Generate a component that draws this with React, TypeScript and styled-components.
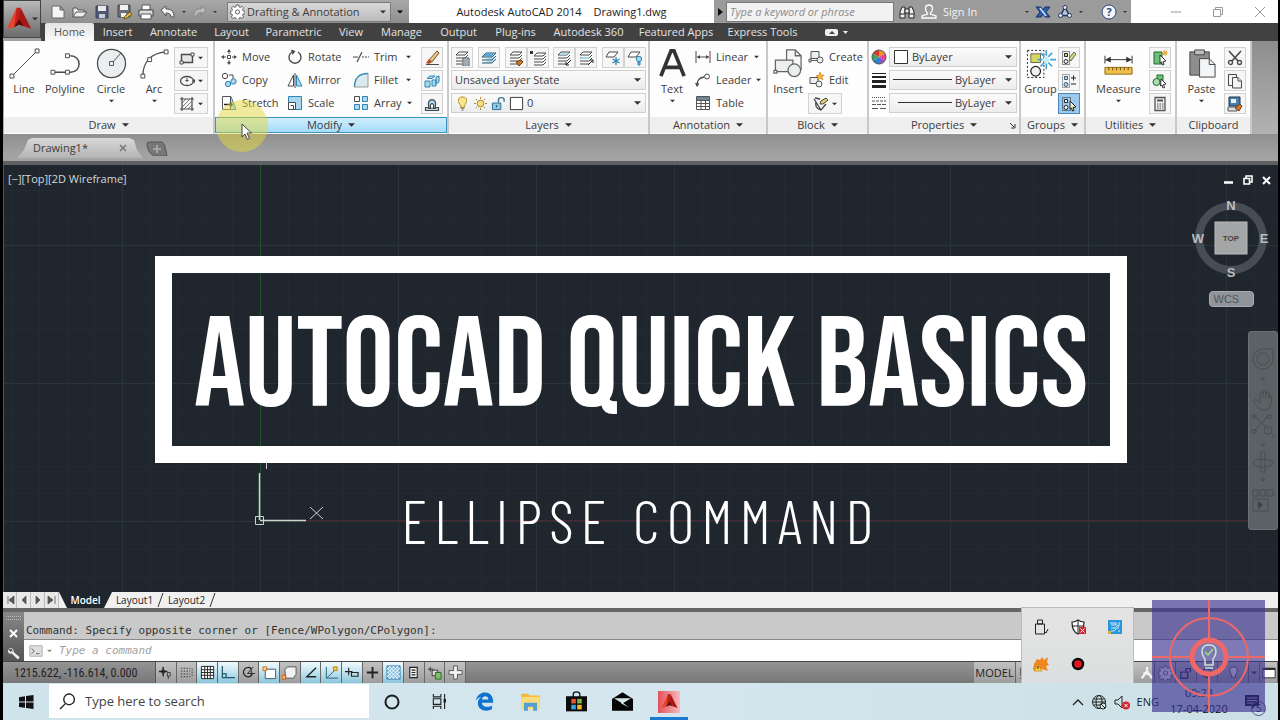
import React from 'react';
import styled, { createGlobalStyle, css } from 'styled-components';

const GlobalStyle = createGlobalStyle`
  * { box-sizing: border-box; }
  html, body, #root { margin: 0; min-height: 100vh; }
  body { background: #000; font-family: "Open Sans", "Noto Sans", sans-serif; font-size: 11px; line-height: 16px; color: #3c3c3c; overflow: hidden; }
  button, input, select { font: inherit; color: inherit; margin: 0; padding: 0; border: 0; background: none; border-radius: 0; outline: 0; }
  button { cursor: pointer; white-space: nowrap; }
  svg { display: block; flex: none; }
  a { color: inherit; text-decoration: none; }
`;

/* ---------- icons ---------- */

const K = '#4a4a4a';
const B = '#2f86b5';
const L = '#a9d8ee';
const sheets = <path d="M4 3h9l-3 3H1zM1 9h9l3-3M1 12h9l3-3M1 15h9l3-3" transform="translate(1 -1)" stroke={K} fill="#fff" />;

const glyphs: Record<string, React.ReactNode> = {
  newFile: <path d="M2 2h8l4 4v8H2zM10 2v4h4" fill="#f5f5f5" stroke="#666" />,
  open: <path d="M1 13V4h4l1 2h6v2M1 13l3-5h11l-4 5z" fill="#eee" stroke="#555" />,
  save: <g><path d="M2 2h12v12H2z" fill="#4d5873" stroke="#3b4358" /><path d="M4 2h8v5H4z" fill="#e8e8e8" /><path d="M5 10h6v4H5z" fill="#c8ccd6" /></g>,
  saveAs: <g><path d="M2 1h12v12H2z" fill="#6b6f7b" stroke="#444" /><path d="M4 1h8v5H4zM5 9h5v4H5z" fill="#f2f2f2" /><path d="m8 15 1-3 5-4 2 2-5 4z" fill="#e3bb4e" stroke="#7a5a12" /></g>,
  print: <g><path d="M4 1h8v5H4z" fill="#fff" stroke="#555" /><path d="M1 6h14v6H1z" fill="#ddd" stroke="#444" /><path d="M3 10h10v5H3z" fill="#fff" stroke="#555" /></g>,
  undo: <path d="M1 6 6 2v3c5 0 8 2 8 8h-3c0-3-2-4-5-4v3z" fill="#f1f1f1" stroke="#555" />,
  redo: <path d="m15 6-5-4v3c-5 0-8 2-8 8h3c0-3 2-4 5-4v3z" fill="#bbb" stroke="#848484" />,
  gear: <g fill="none" stroke="#555"><path d="M6.700 1h2.600l.4 2 1.300.6 1.800-1.100 1.700 1.700-1.100 1.800.6 1.300 2 .4v2.600l-2 .4-.6 1.300 1.100 1.800-1.700 1.700-1.800-1.100-1.300.6-.4 2H6.700l-.4-2-1.300-.6-1.800 1.100-1.700-1.700L2.600 12 2 10.700l-1.500-.4V7.700L2 7.300 2.600 6 1.500 4.200l1.700-1.700L5 3.600 6.300 3z" fill="#fff" /><circle cx="8" cy="8.500" r="2.200" /></g>,
  binoc: <g fill="#eee" stroke="#222"><path d="M1 14V8l2-5h3v11zM10 14V3h3l2 5v6z" /><path d="M6 5h4v4H6zM1 10h5M10 10h5" /></g>,
  user: <g fill="none" stroke="#fff" strokeWidth="1.300"><path d="M8 1c5 0 4 6 1.500 8v1L15 12v2H1v-2l5.500-2V9C4 7 3 1 8 1z" /></g>,
  exchange: <g><path d="M1 3h5l2 3 2-3h5l-4 5 4 5h-5l-2-3-2 3H1l4-5z" fill="#2b5fae" stroke="#16305f" /><path d="m5 4 6 8" stroke="#cfe0ff" strokeWidth="1.500" /></g>,
  a360: <g fill="none" stroke="#26365a"><path d="M8 3.500 3.500 11.500h9z" strokeWidth="1.500" fill="#b9c4d6" /><circle cx="8" cy="3.500" r="2" fill="#e4ecf7" /><circle cx="3.500" cy="11.500" r="2" fill="#e4ecf7" /><circle cx="12.500" cy="11.500" r="2" fill="#e4ecf7" /></g>,
  line: <g fill="#fff" stroke={K}><path d="M3 29 29 3" /><path d="M1 27h4v4H1zM27 1h4v4h-4z" /></g>,
  pline: <g stroke={K} fill="none"><path d="M3 25h18c12 0 12-17 0-17" strokeWidth="1.500" /><path d="M1 23h4v4H1zM16 23h4v4h-4zM16 6h4v4h-4z" fill="#fff" /></g>,
  circle: <g stroke={K}><circle cx="16" cy="16" r="14.500" fill="#e9eef0" strokeWidth="1.300" /><path d="m16 16 10-11" /><path d="M14 14h4v4h-4z" fill="#fff" /></g>,
  arc: <g stroke={K} fill="none"><path d="M4 29C4 14 13 5 28 4" strokeWidth="1.300" /><path d="M2 27h4v4H2zM26 2h4v4h-4zM9 10h4v4H9z" fill="#fff" /></g>,
  rect: <g stroke={K} fill="#e6e6e6"><path d="M2.500 4.500h11v8h-11z" strokeWidth="1.400" /><path d="M1 11h3v3H1zM12 3h3v3h-3z" fill="#fff" /></g>,
  ellipse: <g stroke={K} fill="none"><ellipse cx="8" cy="8" rx="6.500" ry="4.500" strokeWidth="1.300" /><path d="M8 5v4M6.500 7.500h3M14 7h2v2h-2z" fill={K} /></g>,
  hatch: <g stroke={K} fill="none"><path d="M3 1v14M13 1v14M1 3h14M1 13h14" strokeWidth="1.200" /><path d="m3 7 4-4M3 11l8-8M5 13l8-8M9 13l4-4" strokeWidth=".7" /></g>,
  move: <g fill={K} stroke={K}><path d="M8 2v3M8 11v3M2 8h3M11 8h3" /><path d="m8 0 2 3H6zM8 16l2-3H6zM0 8l3-2v4zM16 8l-3-2v4z" stroke="none" /><path d="M6.500 6.500h3v3h-3z" fill="#fff" /></g>,
  copy: <g fill="#fff" stroke={K}><circle cx="4" cy="4" r="2.700" /><path d="M8 3h4v4" fill="none" /><circle cx="7" cy="12" r="2.700" fill={L} stroke={B} /><circle cx="12.500" cy="9.500" r="2.700" fill={L} stroke={B} /></g>,
  stretch: <g fill="none" stroke={K}><path d="M8 1.500h2l5 13H8" fill={L} stroke={B} /><path d="M1.500 1.500h8v13h-8z" fill="#fff" stroke="#555" /><path d="M3 9.500h8M9 7.500l2 2-2 2" strokeWidth="1.400" stroke="#222" /></g>,
  rotate: <g fill="none" stroke={K} strokeWidth="1.400"><path d="M5 3a6 6 0 1 0 6 0" /><path d="M4 .5 8.500 2 5.500 6z" fill={K} stroke="none" /></g>,
  mirror: <g stroke={K} fill="#fff"><path d="M6.500 3v11H1z" /><path d="M9.500 3v11H15z" fill={L} stroke={B} /><path d="M8 1v15" /></g>,
  scale: <g><path d="M1.500 1.500h13v13h-13z" fill={L} stroke={B} /><path d="M1.500 7.500h7v7h-7z" fill="#fff" stroke={K} /><path d="M3.500 10.500h3v4h-3" fill="none" stroke={K} /></g>,
  trim: <g fill="none" stroke={K} strokeWidth="1.200"><path d="M0 8h5M4 13l5-10" /><path d="M9 8h7" strokeDasharray="2 1" /></g>,
  fillet: <g><path d="M1.500 15C1.500 6 6 1.500 15 1.500V15z" fill="#dceaf0" /><path d="M1.500 15C1.500 6 6 1.500 15 1.500" fill="none" stroke={B} strokeWidth="1.400" /><path d="M15 1v14H1" stroke="#999" fill="none" /></g>,
  array: <g fill={L} stroke={B}><path d="M1.500 1.500h5v5h-5z" fill="#fff" stroke={K} /><path d="M9.500 1.500h5v5h-5zM1.500 9.500h5v5h-5zM9.500 9.500h5v5h-5z" /></g>,
  erase: <g><path d="m5 10 8-9 2 2-7 9z" fill="#e6c48b" stroke="#7a5522" /><path d="m2 13 3-4 3 3-3 2z" fill="#c0492b" /><path d="M2 14.500h13" stroke={K} /></g>,
  explode: <g fill={L} stroke={B}><path d="M1 8h5v6H1zM3 5.500 6 3h5L8 5.500zM8 7h4v6H8zM12 4l3-1v6l-3 2z" /></g>,
  offset: <g fill="none" stroke={K} strokeWidth="1.200"><path d="M1.500 14.500v-3H5C1 1 15 1 11 11.500h3.500v3z" fill={L} /><path d="M4 12.500h3C4 6 12 6 9 12.500h3" fill="#fff" /></g>,
  layers: <g>{sheets}<path d="M9 8h6v8H9z" fill="#dce8ef" stroke="#456" /><path d="M10 10h4M10 12h4M10 14h4" stroke="#456" strokeWidth=".8" /></g>,
  layers2: <g><path d="M5 3h10l-4 4H1zM1 10h10l4-4M1 13h10l4-4" stroke="#2b5a72" fill={L} /><path d="M5 3h8l-2 3H3z" fill="#5aa8cf" /></g>,
  layers3: <g>{sheets}<path d="m8 12 5-2 2 2-4 4z" fill="#c77a2a" stroke="#70420f" /></g>,
  layers4: <g><g transform="translate(2 1)">{sheets}</g><path d="M0 1h3v3H0z" fill="#333" /></g>,
  layers5: <g>{sheets}<path d="M5 3h8l-2 2H3z" fill={L} /><path d="m15 10-5 5M10 12v3h3" stroke="#222" fill="none" /></g>,
  layers6: <g>{sheets}<path d="M2 9h8l2-2H4z" fill={L} /><path d="m10 15 5-5M12 10h3v3" stroke="#222" fill="none" /></g>,
  layerFreeze: <g><path d="M4 2h9l-4 5H1z" fill="#fff" stroke={K} /><path d="M11 7v8M7.500 9l7 4M14.500 9l-7 4" stroke={B} strokeWidth="1.300" /></g>,
  layerOff: <g><path d="M4 2h9l-4 5H1z" fill="#fff" stroke={K} /><circle cx="12" cy="9" r="2.700" fill={L} stroke={B} /><path d="M11 12h2v3h-2z" fill="#9ab" stroke={B} /></g>,
  bulb: <g><path d="M8 1c-6 0-5 6-2 9v2h4v-2c3-3 4-9-2-9z" fill="#fbe58a" stroke="#b08f2a" /><path d="M6 13h4M7 15h2" stroke="#555" /></g>,
  sun: <g stroke="#a87f26"><circle cx="8" cy="8" r="3.500" fill="#f9e27b" /><path d="M8 1v2M8 13v2M1 8h2M13 8h2M3 3l1.500 1.500M11.500 11.500 13 13M3 13l1.500-1.500M11.500 4.500 13 3" /></g>,
  unlock: <g><path d="M1.500 7.500h9v7h-9z" fill="#8fc6e6" stroke="#2c6c93" /><path d="M8 7V4c0-3 6-3 6 0v2" fill="none" stroke="#3c6f8d" strokeWidth="1.500" /><path d="M6 10v2" stroke="#134" /></g>,
  square: <path d="M1.500 1.500h13v13h-13z" fill="#fff" stroke="#333" />,
  bigA: <path d="M4 29 14.500 3h3L28 29M8 20h16" fill="none" stroke="#333" strokeWidth="3.800" />,
  linear: <g fill={K} stroke={K}><path d="M1 2v12M15 2v12M2 8h12" /><path d="m2 8 3-2v4zM14 8l-3-2v4z" stroke="none" /></g>,
  leader: <g stroke={K} fill="none"><path d="M2 14C2 8 4 6 9 5" strokeWidth="1.300" /><circle cx="12" cy="4.500" r="2.500" /><path d="m0 11 2 4 2.500-3.500z" fill={K} stroke="none" /></g>,
  table: <g stroke="#555" fill="#fff"><path d="M1.500 1.500h13v13h-13z" /><path d="M2 2h12v3H2z" fill="#708591" stroke="none" /><path d="M1 5.500h14M1 8.500h14M1 11.500h14M6 5v10M10.500 5v10" /></g>,
  insert: <g stroke="#666" fill="#eceff0" strokeWidth="1.300"><path d="M14 2h9l6 6v14H14z" fill="#f6f6f6" /><path d="M2.500 12.500h18v12h-18z" /><circle cx="22" cy="23" r="6.500" /><path d="M1 23h3v3H1z" fill="#fff" /><path d="M23 2v6h6" fill="none" /></g>,
  create: <g stroke="#555" fill="#eceff0"><path d="M3 2.500h8v7H3z" /><path d="M1 11.500h9" /><circle cx="12" cy="11" r="3" /><path d="M1 10h2v3H1z" fill="#fff" /></g>,
  editBlock: <g stroke="#555" fill="#eceff0"><path d="M2 5.500h8v6H2z" /><circle cx="11" cy="12" r="3" /><path d="m12 0 1 3 3 0-2 2 1 3-3-2-2 2 0-3-2-1 3-1z" fill="#f6b63f" stroke="#c67c12" strokeWidth=".6" /></g>,
  attrib: <g stroke="#444" fill="none"><path d="m1 3 7 11 5-6M2 2l5 1M8 14c-5-1-6-5-5-8" strokeWidth="1.300" /><path d="m7 8 1-3 5-3 2 2-5 4z" fill="#e9cf6c" /></g>,
  lweight: <path d="M1 1h14v1H1zM1 4h14v2H1zM1 8h14v3H1zM1 13h14v3H1z" fill="#222" />,
  ltype: <g stroke="#555"><path d="M1 2.500h14" strokeDasharray="1 1" /><path d="M1 6h14" strokeDasharray="3 1" /><path d="M1 9.500h14" strokeDasharray="4 1" /><path d="M1 13.500h14" strokeDasharray="6 2" /></g>,
  group: <g fill="none" stroke="#222"><path d="M2.500 2.500h17v28h-17z" strokeDasharray="2 2" /><path d="M6 6h10v9H6z" fill="#d7d85f" stroke="#665" /><circle cx="11" cy="24" r="5" fill="#eef3f5" strokeWidth="1.300" /><path d="M22 2v6M22 16v6M13 12h5M26 12h6M16 5l4 4M28 5l-4 4M16 19l4-4M28 19l-4-4" stroke="#42a5d6" strokeWidth="1.700" /><circle cx="22" cy="12" r="3" fill="#c9ecfb" stroke="none" /></g>,
  ungroup: <g fill="none" stroke="#222"><path d="M1.500 1.500h7v13h-7z" strokeDasharray="1 1" /><path d="M3.500 3.500h3v3h-3z" fill="#dd6" /><circle cx="5" cy="11.500" r="2" /><path d="m8 8 5-6 2 2-5 7z" fill="#cfd67b" stroke="#665" /></g>,
  groupEdit: <g fill="none" stroke="#456"><path d="M1.500 1.500h7v13h-7z" strokeDasharray="1 1" /><path d="M3.500 3.500h3v3h-3z" fill={L} /><circle cx="5" cy="11.500" r="2" fill={L} /><path d="M10 5h5M12.500 2.500v5M10 11h5" stroke="#222" /></g>,
  groupSel: <g fill="none" stroke="#222"><path d="M1.500 1.500h8v13h-8z" strokeDasharray="1 1" /><path d="M3.500 3.500h3v3h-3z" fill="#fff" /><circle cx="5" cy="11.500" r="2" fill="#fff" /><path d="m9 5 6 6-3 .5 1 3-1.500.5-1-3L9 13z" fill="#eaf4c4" /></g>,
  measure: <g><path d="M2 20h28v7H2z" fill="#efc04c" stroke="#8f6a14" /><path d="M6 20v3M10 20v3M14 20v3M18 20v3M22 20v3M26 20v3" stroke="#6b4e0c" /><path d="M2 8v8M30 8v8M3 12h26" stroke="#333" fill="none" /><path d="m2 12 6-3v6zM30 12l-6-3v6z" fill="#333" /></g>,
  qselect: <g><path d="M2 2h8v12H2z" fill="#6fbf73" stroke="#1f6b2b" /><path d="m8 5 6 6-3 .5 1 3-1.500.5-1-3L8 13z" fill="#fff" stroke="#333" /><path d="M13 0v6M10 3h6M11 1l4 4M15 1l-4 4" stroke="#e8a420" /></g>,
  selectAll: <g><path d="M5 2h6v6H5z" fill="#6fbf73" stroke="#1f6b2b" /><circle cx="4.500" cy="9" r="3.500" fill="#a9dcb0" stroke="#1f6b2b" /><path d="m9 6 5 5-2.500.5 1 3-1.500.5-1-3-1.500 1z" fill="#fff" stroke="#333" /></g>,
  calc: <g stroke="#555" fill="#eee"><path d="M3 1.500h10v13H3z" strokeWidth="1.300" /><path d="M5 4.500h6" strokeWidth="2" /><path d="M5 8h1.500M7.500 8H9M10 8h1.500M5 10h1.500M7.500 10H9M10 10h1.500M5 12h1.500M7.500 12H9M10 12h1.500" /></g>,
  paste: <g stroke="#444"><path d="M4 4h20v24H4z" fill="#8d8d8d" /><path d="M9 2h10v5H9z" fill="#bfbfbf" /><path d="M14 11h10l6 6v13H14z" fill="#f3f5f7" /><path d="M24 11v6h6" fill="none" /></g>,
  cut: <g fill="none" stroke={K} strokeWidth="1.300"><path d="m2 1 9 10M14 1 5 11" strokeWidth="1.600" /><circle cx="3.500" cy="12.500" r="2" /><circle cx="12.500" cy="12.500" r="2" /></g>,
  copyClip: <g fill="#f4f4f4" stroke={K}><path d="M1.500 1.500h8v11h-8z" /><path d="M5.500 4.500H11l3.500 3.500v7h-9z" /><path d="M11 4.500V8h3.500" /></g>,
  matchProp: <g><path d="M2 1h11v9H2z" fill="#4a7fae" stroke="#234" /><path d="M4 3h5v4H4z" fill="#e6eff6" /><path d="M1 11h9v4H1z" fill="#ddd" stroke="#555" /><path d="m8 12 5-4 2 2-3 5z" fill="#cf7a2d" stroke="#70420f" /></g>,
  infer: <g stroke="#222" fill="none"><path d="M1 7h9M5.500 2v10" strokeWidth="1.500" /><path d="M4 5.500h3v3H4zM10 8h3v4h-3zM11 12v3" strokeWidth=".8" /></g>,
  snap: <path d="M2 3.500h10M2 6.500h10M2 9.500h10M2 12.500h10M14 4v9" stroke="#333" strokeDasharray="1.500 1.500" />,
  grid: <path d="M1.500 1.500h13v13h-13zM1 5h14M1 8h14M1 11h14M5 1v14M8 1v14M11 1v14" fill="#fff" stroke="#222" />,
  ortho: <path d="M2.500 1v12.500H16M2.500 9.500h4v4" fill="none" stroke="#22586b" strokeWidth="1.300" />,
  polar: <g fill="none" stroke="#222"><path d="M11 4a5 5 0 1 0 1 6" strokeWidth="1.300" /><path d="M13 2 7 9h8M11 5v6" /></g>,
  osnap: <g><path d="M3.500 4.500h11v10h-11z" fill="#fff" stroke="#456" /><path d="M1 2h4v4H1z" fill="#f8cf90" stroke="#c77718" /></g>,
  osnap3d: <g><path d="M3 5l3-3h9v8l-3 4H4z" fill="#f1f1f1" stroke="#555" /><path d="M0 11h4v4H0z" fill="#f8b070" stroke="#c75b18" /></g>,
  otrack: <path d="M14 3 4 12.500h10" fill="none" stroke="#222" strokeWidth="1.400" />,
  ducs: <g fill="none" stroke="#28627c"><path d="M2.500 2v12H15M3 14 12 5" /><path d="M10 2h4v4h-4z" fill="#f1c945" stroke="#b38314" /></g>,
  dyn: <path d="M1 7h8M5 3v8M8 8h7v4H8z" fill="none" stroke="#222" strokeWidth="1.200" />,
  plus: <path d="M8 2v12M2 8h12" stroke="#222" strokeWidth="2" />,
  tpy: <g><path d="M1 1h14v14H1z" fill="#8cc4e8" stroke="#2a70a8" /><path d="m1 5 4-4M1 9l8-8M1 13l12-12M3 15 15 3M7 15l8-8M11 15l4-4M1 11l4 4M1 7l8 8M1 3l12 12M3 1l12 12M7 1l8 8M11 1l4 4" stroke="#fff" strokeWidth=".8" /></g>,
  qp: <path d="M4 2.500h8v11H4zM6 5.500h4M6 8h4M6 10.500h4" fill="#eee" stroke="#222" strokeWidth="1.200" />,
  cycle: <g stroke="#333" fill="#ddd"><path d="M1 4.500h6M3.500 2v5" /><path d="M5.500 5.500h6v6h-6z" /><path d="M9 8h6v7H9z" fill="#7dc06a" stroke="#2b6b22" /></g>,
  cross: <path d="M6 1h4v5h5v4h-5v5H6v-5H1V6h5z" fill="#f3f3f3" stroke="#555" />,
  layoutIco: <path d="M2 2h12v9H2zM1 14h14M4 4l5 5" fill="#eee" stroke="#333" />,
  person: <path d="M8 1v5M8 6l-6 8M8 6l6 8M4 8l8 2" stroke="#f2f2f2" strokeWidth="2.500" fill="none" />,
  lock: <path d="M2 7h8v7H2zM8 7V3h5v4" fill="none" stroke="#24244c" strokeWidth="1.600" />,
  lightOff: <path d="M8 2c-6 0-4 6-2 8v3h4v-3c2-2 4-8-2-8z" fill="#fff" stroke="#444" />,
  max: <g><path d="M1 2.500h14v11H1z" fill="#fff" stroke="#222" /><path d="M1 3.500h14" stroke="#222" strokeWidth="2" /></g>,
  wrench: <path d="M2 2c2-2 7 0 6 4l7 6c1 2-1 4-3 2L6 8C2 9 0 5 2 3l2 3 3-1-1-3z" fill="#f1f1f1" />,
  prompt: <g><path d="M1 2h14v12H1z" fill="#dedede" stroke="#aaa" /><path d="m3 5 3 3-3 3M8 11h4" stroke="#555" fill="none" /></g>,
  start: <path d="M1 3.200 7 2.300V7.600H1zM8 2.100 15.500 1v6.600H8zM1 8.500h6v5.300L1 12.900zM8 8.500h7.500V15L8 13.900z" fill="#111" />,
  search: <g fill="none" stroke="#222" strokeWidth="1.300"><circle cx="9.500" cy="6" r="5" /><path d="m6 10-5 5" /></g>,
  cortana: <circle cx="8" cy="8" r="5.800" fill="none" stroke="#1c1f22" strokeWidth="1.800" />,
  taskview: <path d="M2.500 5h8v6h-8zM2.500 0v3h8V0M2.500 16v-3h8v3M14.500 0v16M14 6h1.500v2.500H14z" fill="none" stroke="#222" strokeWidth="1.200" />,
  edge: <path d="M.7 7.500C1.500 2.500 5 .3 8.600.4c4.500.1 6.900 3.600 6.700 8.600H5.800c.1 3.500 5.100 4.600 8.500 2.300v3.200C8.700 17.300 2.500 15 2.400 9.400 2.400 6.900 3.800 5 5.600 4.200 3.300 4.400 1.500 5.700.7 7.500zM5.900 6.300h5.300c0-3.600-4.900-3.700-5.300 0z" fill="#0f74cf" />,
  explorer: <g><path d="M1 2h5l1.500 1.500H15V13H1z" fill="#f5b83a" /><path d="M1 4.500h14V14H1z" fill="#fbdc7b" /><path d="M3 15V9h10v6h-3v-3H6v3z" fill="#4d9fd6" /></g>,
  store: <g><path d="M5.500 5V2.500c0-2.500 5-2.500 5 0V5" fill="none" stroke="#111" /><path d="M0 4h16v11.500H0z" fill="#0b0b0b" /><path d="M4 6h3.500v3.500H4z" fill="#e8562a" /><path d="M8.500 6H12v3.500H8.500z" fill="#7db63b" /><path d="M4 10.500h3.500V14H4z" fill="#35a0da" /><path d="M8.500 10.500H12V14H8.500z" fill="#f2b62f" /></g>,
  mail: <g><path d="M0 6l8-5 8 5v9H0z" fill="#050505" /><path d="M1.500 5.500h13L8 9.500z" fill="#d7e6ed" /><path d="m7 8 6 4.500-6-3z" fill="#d7e6ed" /></g>,
  globe: <g fill="none" stroke="#222"><circle cx="8" cy="8" r="6.500" /><ellipse cx="8" cy="8" rx="3" ry="6.500" /><path d="M1.500 8h13M2.500 5h11M2.500 11h11" /><circle cx="12" cy="12" r="3" fill="#d5e6ec" /><path d="m10 10 4 4" /></g>,
  mute: <g><path d="M1 6h3l4-4v12l-4-4H1z" fill="none" stroke="#222" /><circle cx="12" cy="11.500" r="4" fill="#d3232e" /><path d="m10.300 9.800 3.400 3.400M13.700 9.800l-3.400 3.400" stroke="#fff" /></g>,
  notif: <g><path d="M1 1h14v11h-4l-3 3v-3H1z" fill="#08081c" /><path d="M3 4h10M3 6.500h10M3 9h7" stroke="#b9c8dc" /></g>,
  usb: <path d="M4.500 1h5v4h-5zM2.500 5h9v10h-9zM11 12l2 2 2-4" fill="none" stroke="#222" />,
  shield: <g><path d="M8 1c2 1.500 4 2 6 2 0 6-1 10-6 12C3 13 2 9 2 3c2 0 4-.5 6-2z" fill="#fff" stroke="#222" strokeWidth="1.200" /><path d="M8 1v14M2 7h12" stroke="#222" /><path d="M9 8h7v7H9z" fill="#d8232e" /><path d="m10.500 9.500 4 4M14.500 9.500l-4 4" stroke="#fff" /></g>,
  intel: <g><path d="M1 1h14v14H1z" fill="#2a96dc" /><path d="M3 4h6v2H4M12 3v4H9M4 9h8M4 12h3l2-2M11 12h2" fill="none" stroke="#d3f0ff" /><path d="M1 12h3v3H1z" fill="#d9b436" /></g>,
  fox: <g><path d="M1 8 4 3l3 1 2-3 2 3 4-3-1 5 2 3-3 1 2 5-6-2-9 1z" fill="#f1851f" /><path d="m5 8 4 7H1z" fill="#ffd23a" stroke="#b87a00" strokeWidth=".6" /><path d="M5 10v3" stroke="#222" /></g>,
  record: <circle cx="8" cy="8" r="5" fill="#e8141c" stroke="#0c0c0c" strokeWidth="2.500" />,
};

type IconProps = { name: string; size?: number; box?: number };
const Icon = ({ name, size = 16, box = 16 }: IconProps) => (
  <svg width={size} height={size} viewBox={`0 0 ${box} ${box}`} fill="none" aria-hidden="true">{glyphs[name]}</svg>
);
const Caret = ({ w = 7, color = '#333' }: { w?: number; color?: string }) => (
  <svg width={w} height={4} viewBox="0 0 8 4" aria-hidden="true"><path d="M0 0h8L4 4z" fill={color} /></svg>
);
const AutocadMark = ({ size }: { size: number }) => (
  <svg width={size} height={size} viewBox="0 0 32 32" aria-hidden="true">
    <path d="M13 2 1 28l9-2 5-9z" fill="#e8452f" />
    <path d="M13 2h5l-1 15-7 9z" fill="#c2201a" />
    <path d="M18 2 31 28l-9-3-6-8z" fill="#a81712" />
    <path d="m16 16 6 9-6-2-6 3z" fill="#5d0806" />
  </svg>
);

/* ---------- header ---------- */

const Shell = styled.div`
  min-height: 100vh; display: flex; flex-direction: column; margin: 0 2px 0 3px; position: relative; background: #8f8f8f;
`;
const Header = styled.header`
  display: grid; grid-template-columns: 38px minmax(0, 1fr); grid-template-rows: 23px 18px; background: #a0a0a0;
`;
const AppButton = styled.button`
  grid-row: 1 / 3; height: 38px; display: flex; align-items: center; justify-content: space-between; padding: 0 2px 0 2px;
  border: 1px solid #444; background: linear-gradient(#b9b9b9, #8a8a8a 60%, #6c6c6c);
`;
const TitleRow = styled.div`display: flex; background: #fff; min-width: 0;`;
const QuickAccess = styled.div`
  display: flex; align-items: center; gap: 6px; width: 368px; padding-left: 9px; background: linear-gradient(#a8a8a8, #8f8f8f);
`;
const ToolButton = styled.button`display: flex; align-items: center; justify-content: center;`;
const Workspace = styled.label`
  display: flex; align-items: center; gap: 2px; flex: 1; height: 20px; margin-left: 4px; padding: 0 4px 0 2px;
  border: 1px solid #7b7b7b; background: linear-gradient(#d8d8d8, #bcbcbc);
`;
const BareSelect = styled.select`appearance: none; flex: 1; min-width: 0; width: 100%; height: 18px; text-overflow: clip; white-space: nowrap;`;
const WindowTitle = styled.div`flex: 1; display: flex; justify-content: center; align-items: center; gap: 12px; color: #222; white-space: nowrap;`;
const InfoCenter = styled.div`
  display: flex; align-items: center; width: 417px; background: #9b9b9b; padding-right: 4px;
`;
const InfoArrow = styled.button`width: 12px; display: flex; justify-content: center;`;
const InfoSearch = styled.input`
  width: 168px; height: 20px; padding-left: 3px; border: 1px solid #777; background: #f2f2f2; font-style: italic;
  &::placeholder { color: #8b8b8b; opacity: 1; }
`;
const InfoTools = styled.div`flex: 1; display: flex; align-items: center; gap: 6px; padding-left: 5px; color: #f3f3f3;`;
const Spring = styled.span`flex: 1;`;
const WindowButtons = styled.div`width: 147px; display: flex; justify-content: space-between; align-items: center; padding: 0 13px 0 40px;`;

const TabRow = styled.nav`display: flex; background: #414141; padding-left: 4px; color: #e3e3e3; white-space: nowrap;`;
const Tab = styled.a<{ $active?: boolean; $w: number }>`
  width: ${p => p.$w}px; height: 18px; text-align: center; line-height: 18px;
  ${p => p.$active && css`background: linear-gradient(#e3e3e3, #fafafa); color: #555; border-radius: 2px 2px 0 0;`}
`;

/* ---------- ribbon ---------- */

const Ribbon = styled.section`display: flex; height: 93px; background: linear-gradient(#8d8d8d, #b2b2b2); padding-left: 1px;`;
const PanelBox = styled.section<{ $w: number }>`
  width: ${p => p.$w}px; flex: none; display: flex; flex-direction: column; background: #fdfdfd; border-right: 2px solid #c9c9c9; position: relative;
`;
const PanelBody = styled.div<{ $gap?: number; $inset?: number }>`flex: 1; display: flex; gap: ${p => p.$gap ?? 0}px; padding: 5px 4px 0 ${p => p.$inset ?? 2}px;`;
const PanelTitle = styled.button<{ $hot?: boolean }>`
  height: 16px; margin-bottom: 1px; display: flex; align-items: center; justify-content: center; gap: 6px; background: #efefef; position: relative;
  ${p => p.$hot && css`background: linear-gradient(#cfeefd, #a5dcf8); border: 1px solid #3f92bd;`}
`;
const Launcher = styled.span`position: absolute; right: 3px; top: 5px;`;
const BigButton = styled.button<{ $w: number }>`
  width: ${p => p.$w}px; display: flex; flex-direction: column; align-items: center; align-self: flex-start; padding-top: 2px; line-height: 16px;
`;
const BigLabel = styled.span`margin: 2px 0 2px;`;
const Stack = styled.div<{ $w: number }>`width: ${p => p.$w}px; display: flex; flex-direction: column; flex: none;`;
const RowButton = styled.button`
  display: flex; align-items: center; gap: 5px; height: 22px; text-align: left; margin-bottom: 1px;
  & > span { flex: 1; }
`;
const Chip = styled.button<{ $on?: boolean }>`
  height: 21px; margin: 1px 0; display: flex; align-items: center; justify-content: space-evenly; border: 1px solid #d2d2d2; background: #f6f6f6;
  ${p => p.$on && css`background: #9cc9f0; border-color: #4a86b8;`}
`;
const ChipRow = styled.div`display: flex; justify-content: space-between; height: 23px;`;
const ChipPair = styled.div<{ $w: number }>`width: ${p => p.$w}px; display: flex; & > button { flex: 1; }`;
const Combo = styled.label`
  display: flex; align-items: center; gap: 3px; height: 20px; margin: 1px 0; padding: 0 4px 0 3px; border: 1px solid #d0d0d0;
  background: linear-gradient(#fbfbfb, #ececec);
`;
const FixedSelect = styled(BareSelect)`flex: none; width: 42px;`;
const RowLine = styled.div`display: flex; align-items: center; gap: 2px; margin-bottom: 1px; & > label { flex: 1; min-width: 0; }`;
const Highlight = styled.div`
  position: absolute; left: 1px; top: 59px; width: 52px; height: 52px; border-radius: 50%; background: rgba(226, 216, 60, .5);
  pointer-events: none; z-index: 4; display: flex; align-items: center; justify-content: center; padding: 12px 0 0 10px;
`;

/* ---------- document area ---------- */

const DocBar = styled.div`
  height: 31px; display: flex; align-items: center; padding: 0 0 4px 14px; background: linear-gradient(#8f8f8f, #a3a3a3 80%); border-bottom: 4px solid #5e6163;
`;
const DocTab = styled.div`
  width: 126px; height: 20px; margin-top: 5px; display: flex; align-items: center; justify-content: space-between; padding: 0 16px;
  background: linear-gradient(#d8d8d8, #b4b4b4); clip-path: polygon(0 100%, 7px 60%, 11px 10%, 15px 0, 112px 0, 117px 10%, 120px 60%, 100% 100%);
`;
const Canvas = styled.main`flex: 1; min-height: 0; position: relative; background: #1f262e; overflow: hidden; border-left: 1px solid #555;`;
const Backdrop = styled.svg`position: absolute; inset: 0; width: 100%; height: 100%;`;
const ViewLabel = styled.div`position: absolute; left: 4px; top: 6px; color: #d4d8da;`;
const ViewControls = styled.div`position: absolute; right: 7px; top: 10px; display: flex; gap: 9px; align-items: center;`;
const CubeWrap = styled.div`position: absolute; right: 8px; top: 32px; width: 78px; display: flex; flex-direction: column; align-items: center;`;
const Wcs = styled.button`
  width: 45px; height: 16px; margin-top: 10px; padding-left: 4px; text-align: left; border-radius: 4px; border: 1px solid #a4aaae; background: #8f959a; color: #50565b;
  font: 11px/13px "Liberation Sans", sans-serif;
`;
const NavBar = styled.div`
  position: absolute; right: 0; top: 166px; width: 30px; height: 199px; border-radius: 3px; background: #5b6164; border: 1px solid #6b7174;
`;
const Poster = styled.div`position: absolute; inset: 0; display: flex; flex-direction: column; align-items: center; padding-top: 91px; color: #fff;`;
const PosterFrame = styled.h1`
  margin: 0; width: 90%; max-width: 972px; height: 207px; padding-top: 16px; border: 17px solid #fff; display: flex; align-items: center; justify-content: center;
  font: 400 128px/128px "Bebas Neue", "Roboto Condensed", "Liberation Sans Narrow", sans-serif; white-space: nowrap;
`;
const PosterSub = styled.h2`
  margin: 27px 0 0; font: 300 61px/60px "Barlow Condensed", "Roboto Condensed", "Lato", sans-serif; letter-spacing: 7px; white-space: nowrap;
`;

/* ---------- bottom ---------- */

const LayoutTabs = styled.div`
  height: 20px; display: flex; align-items: center; background: #f0f0f0; border-bottom: 4px solid #666; color: #222;
`;
const PageButton = styled.button`width: 14px; height: 16px; display: flex; align-items: center; justify-content: center; border-right: 1px solid #bbb; background: #e8e8e8;`;
const ModelTab = styled.button`
  width: 53px; height: 16px; background: #1f262e; color: #fff; font-weight: 600; font-size: 10px; clip-path: polygon(0 0, 100% 0, 45px 100%, 8px 100%);
`;
const LayoutTab = styled.button`width: 45px; height: 16px; font-size: 10px;`;
const CommandArea = styled.section`
  height: 50px; display: grid; grid-template-columns: 21px minmax(0, 1fr); grid-template-rows: 28px 21px; background: #5e5e5e;
  font: 11px/16px "DejaVu Sans Mono", monospace; border-bottom: 1px solid #444;
`;
const CommandSide = styled.div`
  grid-row: 1 / 3; display: flex; flex-direction: column; align-items: center; justify-content: space-between; padding: 4px 0 1px;
  background: linear-gradient(#888, #555);
`;
const CommandLog = styled.output`display: flex; align-items: flex-end; padding: 0 2px; background: #c9c9c9; border-bottom: 1px solid #888; color: #333; white-space: nowrap;`;
const CommandLine = styled.label`display: flex; align-items: center; gap: 4px; padding-left: 5px; background: #fff;`;
const CommandInput = styled.input`flex: 1; padding-left: 3px; font-style: italic; &::placeholder { color: #a2a2a2; opacity: 1; }`;

const StatusBar = styled.div`height: 21px; display: flex; background: linear-gradient(#949494, #777); color: #222; position: relative;`;
const Coords = styled.div`width: 153px; padding-left: 11px; font: 12px/22px "Roboto Condensed", "Liberation Sans Narrow", sans-serif; white-space: nowrap; border-right: 1px solid #555;`;
const StatusGroup = styled.div`display: flex; width: 310px; & > button { flex: 1; }`;
const StatusButton = styled.button<{ $on?: boolean; $w?: number }>`
  display: flex; align-items: center; justify-content: center; border-right: 1px solid #666; height: 21px;
  ${p => p.$w && css`width: ${p.$w}px;`}
  background: ${p => (p.$on ? 'linear-gradient(#f1fafd, #bfe3ef 50%, #8cc6da)' : 'linear-gradient(#c2c2c2, #9d9d9d)')};
`;
const Tray = styled.div`
  position: absolute; right: 144px; bottom: 0; width: 113px; height: 76px; display: grid; grid-template-columns: repeat(3, 1fr); place-items: center;
  background: linear-gradient(#e4e4e4, #dcdedf); border: 1px solid #bbb; border-bottom: 0;
`;
const TaskBar = styled.footer`height: 37px; display: flex; align-items: stretch; background: linear-gradient(90deg, #cfe3ea, #d5e6ee 50%, #cbe0e6); color: #222; position: relative;`;
const StartButton = styled.button`width: 46px; display: flex; align-items: center; justify-content: center;`;
const TaskSearch = styled.label`width: 320px; margin: 1px 0 2px; padding-left: 10px; display: flex; align-items: center; gap: 9px; background: #fff;`;
const TaskInput = styled.input`flex: 1; font-size: 13px; height: 30px; &::placeholder { color: #444; opacity: 1; }`;
const TaskButton = styled.button<{ $active?: boolean }>`
  width: 46px; display: flex; align-items: center; justify-content: center; border-bottom: 3px solid transparent; border-top: 3px solid transparent;
  ${p => p.$active && css`width: 38px; margin-left: 5px; border-bottom-color: #1b7bd0;`}
`;
const RedTile = styled.span`width: 22px; height: 22px; display: flex; align-items: center; justify-content: center; background: linear-gradient(90deg, #e2525a, #f7b9bd);`;
const TrayRight = styled.div`margin-left: auto; display: flex; align-items: center; gap: 7px; padding-right: 16px; font-size: 11px;`;
const Clock = styled.time`width: 66px; display: flex; flex-direction: column; align-items: center; padding-bottom: 2px; color: #080808;`;
const Notif = styled.button`position: relative; width: 18px; margin-left: 5px;`;
const Badge = styled.span`
  position: absolute; left: 7px; top: 7px; width: 15px; height: 15px; border-radius: 50%; border: 1px solid #58538c; text-align: center; font-size: 10px; line-height: 13px;
`;
const Watermark = styled.div`position: absolute; right: 13px; bottom: 8px; width: 113px; height: 112px; background: rgba(60, 52, 144, .66); z-index: 5; pointer-events: none;`;

const Panel = ({ title, w, gap, inset, hot, plain, launcher, children }: {
  title: string; w: number; gap?: number; inset?: number; hot?: boolean; plain?: boolean; launcher?: boolean; children: React.ReactNode;
}) => (
  <PanelBox $w={w}>
    <PanelBody $gap={gap} $inset={inset}>{children}</PanelBody>
    <PanelTitle $hot={hot}>
      {title}{!plain && <Caret />}
      {launcher && <Launcher><svg width="7" height="7" viewBox="0 0 7 7"><path d="M1 1l4 4M6 2v4H2" stroke="#333" fill="none" /></svg></Launcher>}
    </PanelTitle>
    {hot && (
      <Highlight>
        <svg width="12" height="18" viewBox="0 0 12 18"><path d="M1 1v13l3-3 2.500 5.500 2-1L6 10h4.500z" fill="#fff" stroke="#444" /></svg>
      </Highlight>
    )}
  </PanelBox>
);
const Big = ({ icon, label, w, menu }: { icon: string; label: string; w: number; menu?: boolean }) => (
  <BigButton $w={w}><Icon name={icon} size={31} box={32} /><BigLabel>{label}</BigLabel>{menu && <Caret w={5} />}</BigButton>
);
const Row = ({ icon, label, menu }: { icon: string; label: string; menu?: boolean }) => (
  <RowButton><Icon name={icon} /><span>{label}</span>{menu && <Caret w={5} />}</RowButton>
);
const Split = ({ icon }: { icon: string }) => (
  <Chip aria-label={icon}><Icon name={icon} /><Caret w={5} /></Chip>
);
const SmallChip = ({ icon, on }: { icon: string; on?: boolean }) => <Chip $on={on} aria-label={icon}><Icon name={icon} /></Chip>;

const tabs: [string, number][] = [['Home', 49], ['Insert', 47], ['Annotate', 65], ['Layout', 51], ['Parametric', 73], ['View', 42], ['Manage', 59],
  ['Output', 55], ['Plug-ins', 59], ['Autodesk 360', 87], ['Featured Apps', 88], ['Express Tools', 85]];
const statusIcons = ['infer', 'snap', 'grid', 'ortho', 'polar', 'osnap', 'osnap3d', 'otrack', 'ducs', 'dyn', 'plus', 'tpy', 'qp', 'cycle', 'cross'];
const statusOn = new Set(['grid', 'ortho', 'osnap', 'otrack', 'ducs', 'dyn', 'tpy']);

const RibbonPanels = () => (
  <Ribbon>
    <Panel title="Draw" w={211}>
      <Big icon="line" label="Line" w={36} /><Big icon="pline" label="Polyline" w={46} />
      <Big icon="circle" label="Circle" w={46} menu /><Big icon="arc" label="Arc" w={40} menu />
      <Stack $w={34}><Split icon="rect" /><Split icon="ellipse" /><Split icon="hatch" /></Stack>
    </Panel>
    <Panel title="Modify" w={234} gap={10} inset={6} hot>
      <Stack $w={56}><Row icon="move" label="Move" /><Row icon="copy" label="Copy" /><Row icon="stretch" label="Stretch" /></Stack>
      <Stack $w={56}><Row icon="rotate" label="Rotate" /><Row icon="mirror" label="Mirror" /><Row icon="scale" label="Scale" /></Stack>
      <Stack $w={58}><Row icon="trim" label="Trim" menu /><Row icon="fillet" label="Fillet" menu /><Row icon="array" label="Array" menu /></Stack>
      <Stack $w={22}><SmallChip icon="erase" /><SmallChip icon="explode" /><SmallChip icon="offset" /></Stack>
    </Panel>
    <Panel title="Layers" w={201}>
      <Stack $w={195}>
        <ChipRow>
          <ChipPair $w={22}><SmallChip icon="layers" /></ChipPair><ChipPair $w={22}><SmallChip icon="layers2" /></ChipPair>
          <ChipPair $w={44}><SmallChip icon="layers3" /><SmallChip icon="layers4" /></ChipPair>
          <ChipPair $w={44}><SmallChip icon="layers5" /><SmallChip icon="layers6" /></ChipPair>
          <ChipPair $w={44}><SmallChip icon="layerFreeze" /><SmallChip icon="layerOff" /></ChipPair>
        </ChipRow>
        <RowLine><Combo><BareSelect aria-label="Layer state"><option>Unsaved Layer State</option></BareSelect><Caret /></Combo></RowLine>
        <RowLine>
          <Combo>
            <Icon name="bulb" size={15} /><Icon name="sun" size={15} /><Icon name="unlock" size={15} /><Icon name="square" size={15} />
            <BareSelect aria-label="Layer"><option>0</option></BareSelect><Caret />
          </Combo>
        </RowLine>
      </Stack>
    </Panel>
    <Panel title="Annotation" w={118} gap={3}>
      <Big icon="bigA" label="Text" w={40} menu />
      <Stack $w={64}><Row icon="linear" label="Linear" menu /><Row icon="leader" label="Leader" menu /><Row icon="table" label="Table" /></Stack>
    </Panel>
    <Panel title="Block" w={101} gap={2}>
      <Big icon="insert" label="Insert" w={36} />
      <Stack $w={54}><Row icon="create" label="Create" /><Row icon="editBlock" label="Edit" /><ChipPair $w={34}><Split icon="attrib" /></ChipPair></Stack>
    </Panel>
    <Panel title="Properties" w={152} launcher>
      <Stack $w={146}>
        <RowLine>
          <svg width="16" height="16" viewBox="0 0 16 16"><path d="M8 8V1a7 7 0 0 1 6 3.500z" fill="#f0932b" /><path d="M8 8l6-3.500a7 7 0 0 1 0 7z" fill="#e84393" /><path d="M8 8l6 3.500A7 7 0 0 1 8 15z" fill="#8a56c8" /><path d="M8 8v7a7 7 0 0 1-6-3.500z" fill="#2f7fd0" /><path d="M8 8l-6 3.500a7 7 0 0 1 0-7z" fill="#38a94e" /><path d="M8 8 2 4.500A7 7 0 0 1 8 1z" fill="#d83a2e" /><circle cx="8" cy="8" r="7" fill="none" stroke="#555" /></svg>
          <Combo><Icon name="square" /><BareSelect aria-label="Color"><option>ByLayer</option></BareSelect><Caret /></Combo>
        </RowLine>
        {['lweight', 'ltype'].map(n => (
          <RowLine key={n}>
            <Icon name={n} />
            <Combo><svg width="59" height="2"><path d={n === 'ltype' ? 'M5 .5h54' : 'M0 .5h59'} stroke="#333" /></svg><FixedSelect aria-label={n}><option>ByLayer</option></FixedSelect><Spring /><Caret /></Combo>
          </RowLine>
        ))}
      </Stack>
    </Panel>
    <Panel title="Groups" w={65}>
      <Big icon="group" label="Group" w={36} />
      <Stack $w={22}><SmallChip icon="ungroup" /><SmallChip icon="groupEdit" /><SmallChip icon="groupSel" on /></Stack>
    </Panel>
    <Panel title="Utilities" w={91}>
      <Big icon="measure" label="Measure" w={63} menu />
      <Stack $w={22}><SmallChip icon="qselect" /><SmallChip icon="selectAll" /><SmallChip icon="calc" /></Stack>
    </Panel>
    <Panel title="Clipboard" w={75} plain>
      <Big icon="paste" label="Paste" w={46} menu />
      <Stack $w={22}><SmallChip icon="cut" /><SmallChip icon="copyClip" /><SmallChip icon="matchProp" /></Stack>
    </Panel>
  </Ribbon>
);

const ViewCube = () => (
  <CubeWrap>
    <svg width="78" height="84" viewBox="0 0 78 84" fontFamily="Liberation Sans, sans-serif" textAnchor="middle">
      <circle cx="39" cy="41" r="32" fill="none" stroke="#464d55" strokeWidth="8" />
      <rect x="23" y="25" width="32" height="32" fill="#a3a5a7" stroke="#bbb" />
      <text x="39" y="44" fontSize="8" fontWeight="bold" fill="#444">TOP</text>
      <g fontSize="13" fontWeight="bold" fill="#b9bdc0"><text x="39" y="13">N</text><text x="6" y="46">W</text><text x="72" y="46">E</text><text x="39" y="80">S</text></g>
    </svg>
    <Wcs>WCS</Wcs>
  </CubeWrap>
);

export default function App() {
  return (
    <>
      <GlobalStyle />
      <Shell>
        <Header>
          <AppButton aria-label="Application menu"><AutocadMark size={26} /><Caret w={6} /></AppButton>
          <TitleRow>
            <QuickAccess>
              {['newFile', 'open', 'save', 'saveAs', 'print', 'undo'].map(n => <ToolButton key={n} aria-label={n}><Icon name={n} /></ToolButton>)}
              <Caret w={4} /><ToolButton aria-label="Redo"><Icon name="redo" size={15} /></ToolButton><Caret w={4} />
              <Workspace><Icon name="gear" size={15} /><BareSelect aria-label="Workspace"><option>Drafting &amp; Annotation</option></BareSelect><Caret w={6} /></Workspace>
              <ToolButton aria-label="Customize"><Caret w={6} color="#000" /></ToolButton><span />
            </QuickAccess>
            <WindowTitle><span>Autodesk AutoCAD 2014</span><span>Drawing1.dwg</span></WindowTitle>
            <InfoCenter>
              <InfoArrow aria-label="Collapse"><svg width="5" height="8"><path d="M0 0l5 4-5 4z" fill="#111" /></svg></InfoArrow>
              <InfoSearch aria-label="Search help" placeholder="Type a keyword or phrase" />
              <InfoTools>
                <Icon name="binoc" /><Icon name="user" /><a href="#signin">Sign In</a><Spring />
                <Caret w={4} /><Icon name="exchange" /><Icon name="a360" /><Caret w={4} /><span /><span />
                <svg width="16" height="16" viewBox="0 0 16 16"><circle cx="8" cy="8" r="7" fill="#f3f6fb" stroke="#2d4576" /><text x="8" y="12" fontSize="11" fontWeight="bold" textAnchor="middle" fill="#2d4576">?</text></svg>
                <Caret w={4} />
              </InfoTools>
            </InfoCenter>
            <WindowButtons>
              <ToolButton aria-label="Minimize"><svg width="10" height="10"><path d="M0 5h10" stroke="#999" /></svg></ToolButton>
              <ToolButton aria-label="Restore"><svg width="10" height="10"><path d="M.5 2.500h7v7h-7zM2.500 2V.5h7v7H8" fill="none" stroke="#999" /></svg></ToolButton>
              <ToolButton aria-label="Close"><svg width="10" height="10"><path d="m0 0 10 10M10 0 0 10" stroke="#999" /></svg></ToolButton>
            </WindowButtons>
          </TitleRow>
          <TabRow>
            {tabs.map(([t, w], i) => <Tab key={t} href={`#${t}`} $w={w} $active={i === 0}>{t}</Tab>)}
            <Tab href="#minimize" $w={72} aria-label="Minimize ribbon">
              <svg width="72" height="18"><rect x="20" y="6" width="13" height="7" rx="2" fill="#eee" /><path d="m24 11 3-3 3 3z" fill="#444" /><path d="M38 8h5l-2.500 3z" fill="#eee" /></svg>
            </Tab>
          </TabRow>
        </Header>
        <RibbonPanels />
        <DocBar>
          <DocTab><span>Drawing1*</span><svg width="8" height="8"><path d="m1 1 6 6M7 1 1 7" stroke="#777" strokeWidth="1.500" /></svg></DocTab>
          <ToolButton aria-label="New tab"><svg width="26" height="20" viewBox="-3 -5 26 20"><path d="M3 1h13q3 1 5 14H8Q2 12 1 4q0-3 2-3z" fill="#777" stroke="#555" /><path d="M11 4v8M7 8h8" stroke="#a5a5a5" strokeWidth="2" /></svg></ToolButton>
        </DocBar>
        <Canvas>
          <Backdrop>
            <defs>
              <pattern id="grid" x="256" y="80" width="138" height="138" patternUnits="userSpaceOnUse">
                <path d="M28.500 0v138M55.500 0v138M83.500 0v138M110.500 0v138M0 28.500h138M0 55.500h138M0 83.500h138M0 110.500h138" stroke="#222a32" />
                <path d="M.5 0v138M0 .5h138" stroke="#2a343d" />
              </pattern>
            </defs>
            <rect width="100%" height="100%" fill="url(#grid)" />
            <path d="M256.500 0v355" stroke="#24502f" />
            <path d="M256 355.500h1100" stroke="#4d2630" />
            <path d="M255.500 308v47M256 355.500h46" stroke="#c9d8cb" strokeWidth="1.500" />
            <path d="M251.500 351.500h8v8h-8zM306 342l13 12M319 342l-13 12M262.500 296v8" fill="none" stroke="#cdd2d4" />
          </Backdrop>
          <ViewLabel>[−][Top][2D Wireframe]</ViewLabel>
          <Poster>
            <PosterFrame>AUTOCAD QUICK BASICS</PosterFrame>
            <PosterSub>ELLIPSE COMMAND</PosterSub>
          </Poster>
          <ViewControls>
            <svg width="10" height="10"><path d="M0 7.500h9" stroke="#fff" strokeWidth="2.500" /></svg>
            <svg width="10" height="10"><path d="M1 3.500h5.500V9H1zM3 3V1h6v6H7" fill="none" stroke="#fff" strokeWidth="1.600" /></svg>
            <svg width="9" height="9"><path d="m1 1 7 7M8 1 1 8" stroke="#fff" strokeWidth="2" /></svg>
          </ViewControls>
          <ViewCube />
          <NavBar>
            <svg width="28" height="197" viewBox="0 0 28 197" fill="none" stroke="#484e52">
              <path d="M14 17h10v10a10 10 0 1 1-10-10z" /><circle cx="14" cy="27" r="6" /><path d="M12 46h4l-2 2z" />
              <path d="M5 70l4 6c3 3 9 3 12-1l2-9c0-3-3-3-3 0v-4c0-3-3-3-3 0v-2c0-3-3-3-3 0v2c0-3-3-3-3 0v9l-3-3c-2-1-4 0-3 2zM20 66v-5M17 66v-7M14 66v-5" />
              <path d="m5 84 16 15M19 84 5 99M3 83h4v3H3zM18 83h4v3h-4zM3 98h4v3H3z" /><circle cx="19" cy="98" r="4" /><path d="m22 101 4 4M12 112h4l-2 2z" />
              <ellipse cx="14" cy="131" rx="10" ry="4" /><path d="M12 120h4v20h-4zM12 147h4l-2 2z" />
              <path d="M4 158h5v6H4zM11 158h5v6h-5zM18 158h6v6h-6zM4 167h15v12H4z" /><path d="m9 169 5 4-5 4z" fill="#3a4044" />
            </svg>
          </NavBar>
        </Canvas>
        <LayoutTabs>
          {['M3 1v8M9 1 4 5l5 4z', 'M7 1 3 5l4 4z', 'M3 1l4 4-4 4z', 'M1 1l5 4-5 4zM8 1v8'].map(d => (
            <PageButton key={d} aria-label="Scroll layouts"><svg width="10" height="10"><path d={d} fill="#555" stroke="#555" strokeWidth=".8" /></svg></PageButton>
          ))}
          <ModelTab>Model</ModelTab>
          {['Layout1', 'Layout2'].map(t => (
            <React.Fragment key={t}><LayoutTab>{t}</LayoutTab><svg width="7" height="16"><path d="M1 15 6 1" stroke="#333" /></svg></React.Fragment>
          ))}
        </LayoutTabs>
        <CommandArea>
          <CommandSide>
            <svg width="16" height="4"><path d="M0 .5h16M0 3.500h16" stroke="#bbb" strokeDasharray="1 1" /></svg>
            <svg width="9" height="9"><path d="m1 1 7 7M8 1 1 8" stroke="#fff" strokeWidth="2" /></svg>
            <Icon name="wrench" size={13} />
          </CommandSide>
          <CommandLog>Command: Specify opposite corner or [Fence/WPolygon/CPolygon]:</CommandLog>
          <CommandLine><Icon name="prompt" size={14} /><Caret w={5} color="#888" /><CommandInput aria-label="Command" placeholder="Type a command" /></CommandLine>
        </CommandArea>
        <StatusBar>
          <Coords>1215.622, -116.614, 0.000</Coords>
          <StatusGroup>
            {statusIcons.map(n => <StatusButton key={n} $on={statusOn.has(n)} aria-label={n}><Icon name={n} size={15} /></StatusButton>)}
          </StatusGroup>
          <Spring />
          <StatusButton $w={42}>MODEL</StatusButton>
          <StatusButton $w={20} aria-label="Layout"><Icon name="layoutIco" size={14} /></StatusButton>
          <StatusButton $w={119} aria-label="Annotation visibility"><Spring /><Icon name="person" size={14} /></StatusButton>
          <StatusButton $w={21} aria-label="Workspace"><Icon name="gear" size={15} /></StatusButton>
          <StatusButton $w={21} aria-label="Lock"><Icon name="lock" size={14} /></StatusButton>
          <StatusButton $w={21} aria-label="Hardware"><Icon name="cortana" size={12} /></StatusButton>
          <StatusButton $w={31} aria-label="Isolate"><Icon name="lightOff" size={15} /></StatusButton>
          <StatusButton $w={11} aria-label="Status menu"><Caret w={6} /></StatusButton>
          <StatusButton $w={18} aria-label="Clean screen"><Icon name="max" size={14} /></StatusButton>
          <Tray>
            <Icon name="usb" /><Icon name="shield" /><Icon name="intel" /><Icon name="fox" /><Icon name="record" />
          </Tray>
        </StatusBar>
        <TaskBar>
          <StartButton aria-label="Start"><Icon name="start" /></StartButton>
          <TaskSearch><Icon name="search" size={17} /><TaskInput aria-label="Search" placeholder="Type here to search" /></TaskSearch>
          <TaskButton aria-label="Cortana"><Icon name="cortana" size={18} /></TaskButton>
          {['taskview', 'edge', 'explorer', 'store', 'mail'].map(n => (
            <TaskButton key={n} aria-label={n}><Icon name={n} size={n === 'taskview' ? 15 : n === 'edge' ? 19 : 21} /></TaskButton>
          ))}
          <TaskButton $active aria-label="AutoCAD"><RedTile><AutocadMark size={17} /></RedTile></TaskButton>
          <TrayRight>
            <svg width="12" height="8"><path d="m1 7 5-5 5 5" fill="none" stroke="#222" strokeWidth="1.300" /></svg>
            <Icon name="globe" /><Icon name="mute" /><span>ENG</span>
            <Clock><span>09:23</span><span>17-04-2020</span></Clock>
            <Notif aria-label="Notifications"><Icon name="notif" /><Badge>5</Badge></Notif>
          </TrayRight>
        </TaskBar>
        <Watermark>
          <svg width="113" height="112" viewBox="0 0 113 112" fill="none" stroke="#ee6868">
            <path d="M57 0v44M57 74v38M0 57h38M76 57h37" strokeWidth="2" />
            <circle cx="57" cy="57" r="39" strokeWidth="2" />
            <circle cx="57" cy="57" r="17" strokeWidth="5" />
            <path d="M57 45c-9 0-8 9-4 14v6h8v-6c4-5 5-14-4-14zM53 68h8" stroke="#cfe3d4" strokeWidth="1.500" />
            <path d="m53 52 3 3 5-6" stroke="#9be07a" strokeWidth="1.500" />
          </svg>
        </Watermark>
      </Shell>
    </>
  );
}
